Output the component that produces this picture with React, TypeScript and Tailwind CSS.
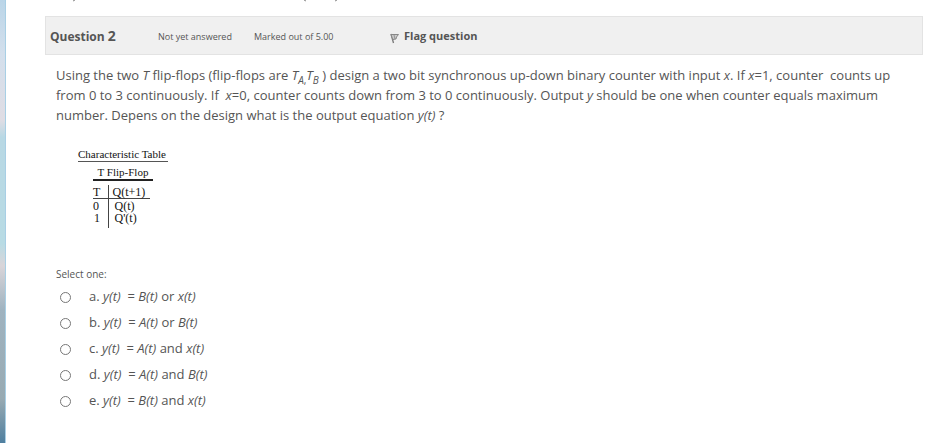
import { ReactNode } from "react";

type Option = {
  key: string;
  output: ReactNode;
};

const options: Option[] = [
  { key: "a", output: <><i>B(t)</i> or <i>x(t)</i></> },
  { key: "b", output: <><i>A(t)</i> or <i>B(t)</i></> },
  { key: "c", output: <><i>A(t)</i> and <i>x(t)</i></> },
  { key: "d", output: <><i>A(t)</i> and <i>B(t)</i></> },
  { key: "e", output: <><i>B(t)</i> and <i>x(t)</i></> },
];

function FlagIcon() {
  return (
    <svg width="10" height="12" viewBox="0 0 10 12" fill="none" aria-hidden="true">
      <path d="M1 2 L3.5 11" stroke="#777" strokeWidth="1.3" />
      <path d="M1 2.5 L8.5 2.5 L6.5 5 L6 7 L2.8 7.5 Z" stroke="#888" fill="#ccc" />
      <path d="M4 3 L5 7" stroke="#888" strokeWidth="0.8" />
    </svg>
  );
}

function QuestionInfo() {
  return (
    <header className="flex h-[39px] items-center border border-[#e3e3e3] bg-[#f0f0f0] pl-1 text-[#555]">
      <h3 className="w-[108px] text-xs font-bold">
        Question <span className="text-sm">2</span>
      </h3>
      <div className="w-24 pt-0.5 text-[9px]">Not yet answered</div>
      <div className="w-[136px] pt-0.5 text-[9px]">Marked out of 5.00</div>
      <button type="button" className="flex items-center gap-1 pt-px text-[11px] font-bold">
        <span className="pt-1">
          <FlagIcon />
        </span>
        Flag question
      </button>
    </header>
  );
}

function CharacteristicTable() {
  return (
    <div className="ml-[22px] mt-[23px] w-[90px] font-['Liberation_Serif',serif] text-[11px] leading-[13px] text-[#111]">
      <div className="whitespace-nowrap border-b border-[#555]">Characteristic Table</div>
      <div className="ml-[15px] mt-1 w-[60px] whitespace-nowrap border-b-2 border-[#222] text-center">
        T Flip-Flop
      </div>
      <table className="ml-[15px] mt-1 border-collapse text-xs leading-3">
        <thead>
          <tr className="border-b border-[#444]">
            <th className="w-[15px] border-r border-[#444] pt-px text-left font-normal">T</th>
            <th className="w-[42px] pl-1 pt-px text-left font-normal">Q(t+1)</th>
          </tr>
        </thead>
        <tbody>
          <tr>
            <td className="border-r border-[#444] pt-px">0</td>
            <td className="pl-[6px] pt-px">Q(t)</td>
          </tr>
          <tr>
            <td className="border-r border-[#444] pb-1 pl-px">1</td>
            <td className="pb-1 pl-[6px]">Q'(t)</td>
          </tr>
        </tbody>
      </table>
    </div>
  );
}

export default function App() {
  return (
    <div className="flex min-h-screen bg-white font-['Open_Sans',sans-serif] text-[#555]">
      <div className="w-[6px] shrink-0 border-r border-[#a8cfe5] bg-[linear-gradient(#bad5e8,#d3dfec_12%,#e0dde4_27%,#b8d8e4_31%,#b8dbe4_55%,#d9d5d9_60%,#9fb3c0_70%,#98aab2_90%,#4f7f9f)]" />
      <main className="min-w-0 flex-1 pl-[39px] pr-6">
        <svg className="block h-4 w-full" aria-hidden="true">
          <path d="M28 1 L30 0 M259 0 L261 1 M290 1 L292 0" stroke="#888" />
        </svg>
        <QuestionInfo />
        <section className="pl-[11px] pr-8 pt-[10px]">
          <p className="text-[13px] leading-5">
            Using the two <i>T</i> flip-flops (flip-flops are{" "}
            <i>
              T<sub className="-bottom-1 text-[10px]">A</sub>
            </i>
            <sub className="-bottom-1 text-[10px]">,</sub>
            <i>
              T<sub className="-bottom-1 text-[10px]">B</sub>
            </i>
            {" "}) design a two bit synchronous up-down binary counter with input <i>x</i>. If{" "}
            <i>x</i>=1, counter&nbsp; counts up from 0 to 3 continuously. If&nbsp; <i>x</i>=0,
            counter counts down from 3 to 0 continuously. Output <i>y</i> should be one when
            counter equals maximum number. Depens on the design what is the output equation{" "}
            <i>y(t)</i> ?
          </p>
          <CharacteristicTable />
          <fieldset className="mt-9">
            <legend className="text-[10px] leading-5">Select one:</legend>
            {options.map((option) => (
              <label key={option.key} className="flex h-[26px] items-center pl-1 text-[13px]">
                <input
                  type="radio"
                  name="answer"
                  value={option.key}
                  className="mr-[18px] size-[11px] appearance-none rounded-full border border-[#777] bg-white checked:bg-[#555]"
                />
                <span>
                  {option.key}. <i>y(t)</i>&nbsp; = {option.output}
                </span>
              </label>
            ))}
          </fieldset>
        </section>
      </main>
    </div>
  );
}
